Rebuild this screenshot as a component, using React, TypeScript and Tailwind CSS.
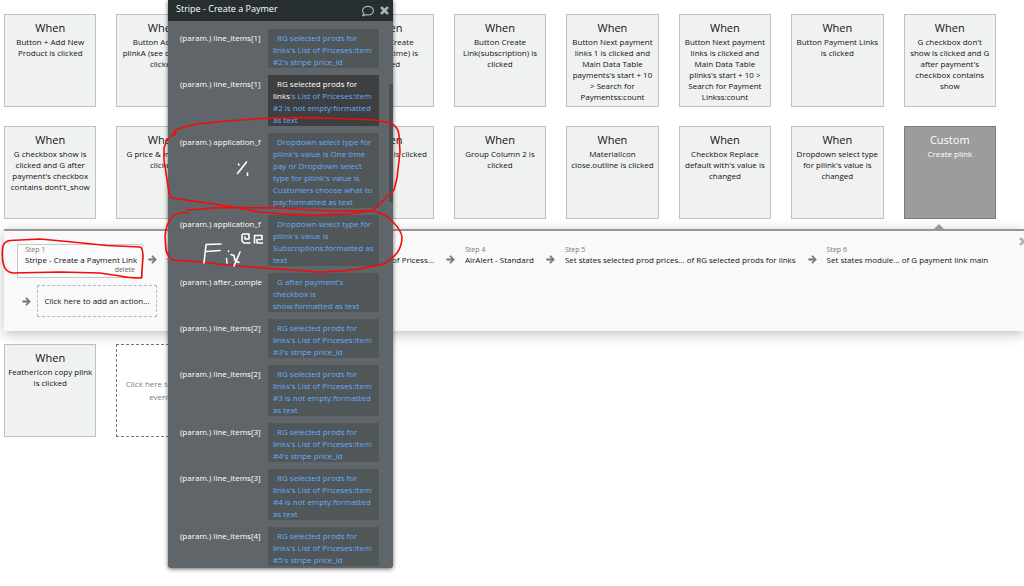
import { FaArrowRight, FaRegComment, FaTimes } from "react-icons/fa";

type EventCard = { kind?: "when" | "custom"; title: string; text: string };

const events: EventCard[] = [
  { title: "When", text: "Button + Add New Product is clicked" },
  { title: "When", text: "Button Add Link plinkA (see descrip) is clicked" },
  { title: "When", text: "Button is clicked" },
  { title: "When", text: "Button Create Link(one time) is clicked" },
  { title: "When", text: "Button Create Link(subscription) is clicked" },
  {
    title: "When",
    text: "Button Next payment links 1 is clicked and Main Data Table payments's start + 10 > Search for Paymentss:count",
  },
  {
    title: "When",
    text: "Button Next payment links is clicked and Main Data Table plinks's start + 10 > Search for Payment Linkss:count",
  },
  { title: "When", text: "Button Payment Links is clicked" },
  { title: "When", text: "G checkbox don't show is clicked and G after payment's checkbox contains show" },
  { title: "When", text: "G checkbox show is clicked and G after payment's checkbox contains dont't_show" },
  { title: "When", text: "G price & interval is clicked" },
  { title: "When", text: "Group is clicked" },
  { title: "When", text: "Group Tabs is clicked" },
  { title: "When", text: "Group Column 2 is clicked" },
  { title: "When", text: "MaterialIcon close.outline is clicked" },
  { title: "When", text: "Checkbox Replace default with's value is changed" },
  { title: "When", text: "Dropdown select type for pliink's value is changed" },
  { kind: "custom", title: "Custom", text: "Create plink" },
];

const params = [
  { label: "(param.) line_items[1]", text: "RG selected prods for links's List of Priceses:item #2's stripe price_id" },
  {
    label: "(param.) line_items[1]",
    lead: "RG selected prods for links",
    text: "'s List of Priceses:item #2 is not empty:formatted as text",
  },
  {
    label: "(param.) application_f",
    text: "Dropdown select type for pliink's value is One time pay or Dropdown select type for pliink's value is Customers choose what to pay:formatted as text",
  },
  { label: "(param.) application_f", text: "Dropdown select type for pliink's value is Subscriptions:formatted as text" },
  { label: "(param.) after_comple", text: "G after payment's checkbox is show:formatted as text" },
  { label: "(param.) line_items[2]", text: "RG selected prods for links's List of Priceses:item #3's stripe price_id" },
  { label: "(param.) line_items[2]", text: "RG selected prods for links's List of Priceses:item #3 is not empty:formatted as text" },
  { label: "(param.) line_items[3]", text: "RG selected prods for links's List of Priceses:item #4's stripe price_id" },
  { label: "(param.) line_items[3]", text: "RG selected prods for links's List of Priceses:item #4 is not empty:formatted as text" },
  { label: "(param.) line_items[4]", text: "RG selected prods for links's List of Priceses:item #5's stripe price_id" },
];

const cardBase = "flex min-h-[93px] w-full flex-col items-center border px-[3px] pt-[7px] text-center";

function Card({ kind = "when", title, text }: EventCard) {
  const custom = kind === "custom";
  return (
    <button
      type="button"
      className={
        custom
          ? `${cardBase} border-[#7d7d7d] bg-[#9c9c9c] text-white`
          : `${cardBase} border-[#b9c2c6] bg-[#f0f2f1] text-[#111]`
      }
    >
      <span className="text-[11px] leading-[11px]">{title}</span>
      <span className="mt-[3px] text-[8px] leading-[11px]">{text}</span>
    </button>
  );
}

function Arrow() {
  return (
    <div className="flex h-7 shrink-0 items-center pr-[3px] pl-[5px]">
      <FaArrowRight className="size-[9px] text-[#777d7f]" stroke="currentColor" strokeWidth={36} />
    </div>
  );
}

function Cross() {
  return <FaTimes className="h-[11px] w-[9px]" stroke="currentColor" strokeWidth={40} />;
}

function Step({ n, text }: { n: number; text: string }) {
  return (
    <div className="shrink-0 px-[7px]">
      <div className="text-[7px] leading-[10px] text-[#777]">Step {n}</div>
      <div className="text-[8px] leading-[10px] whitespace-nowrap text-[#111]">{text}</div>
    </div>
  );
}

function Workflow() {
  return (
    <section className="relative ml-1 h-[102px] border-t-2 border-[#969696] bg-[#f9f9f9] pt-[13px] pl-[13px] shadow-[0_3px_12px_rgba(0,0,0,0.25)]">
      <svg className="absolute -top-[7px] right-[79px] h-[6px] w-3" viewBox="0 0 12 6">
        <path d="M0 6 6 0l6 6z" fill="#969696" />
      </svg>
      <button type="button" aria-label="Close workflow" className="absolute top-[5px] -right-1 text-[#a9b4b8]">
        <Cross />
      </button>
      <div className="flex items-start overflow-hidden">
        <div className="w-[126px] shrink-0 border border-[#c3cacd] bg-[#fbfbfb] pb-[2px]">
          <Step n={1} text="Stripe - Create a Payment Link" />
          <div className="px-[7px] text-right text-[7px] leading-[10px] text-[#666]">
            <button type="button" className="block w-full text-right">delete</button>
          </div>
        </div>
        <div className="flex items-start pt-px">
          <Arrow />
          <div className="w-[100px]"><Step n={2} text="Stripe" /></div>
          <Arrow />
          <div className="flex w-[164px] justify-end"><Step n={3} text="Set states of Pricess..." /></div>
          <Arrow />
          <Step n={4} text="AirAlert - Standard" />
          <Arrow />
          <Step n={5} text="Set states selected prod prices... of RG selected prods for links" />
          <Arrow />
          <Step n={6} text="Set states module... of G payment link main" />
        </div>
      </div>
      <div className="mt-[7px] flex items-center">
        <Arrow />
        <button
          type="button"
          className="ml-[3px] h-8 w-[120px] border border-dashed border-[#aebbc1] text-[8px] text-[#111]"
        >
          Click here to add an action...
        </button>
      </div>
    </section>
  );
}

function PropertyEditor() {
  return (
    <aside className="absolute top-0 left-[168px] flex h-[568px] w-[225px] flex-col overflow-hidden rounded-b-[3px] bg-[#5f6568] shadow-[0_1px_4px_rgba(0,0,0,0.6)]">
      <header className="flex h-[21px] shrink-0 items-center bg-[#272e30] pr-1 pb-1 pl-2 text-white">
        <h2 className="flex-1 text-[9px] leading-3 font-medium">Stripe - Create a Paymer</h2>
        <button type="button" aria-label="Comment" className="mt-1 mr-[6px] text-[#aeb3b5]">
          <FaRegComment className="size-3" />
        </button>
        <button type="button" aria-label="Close" className="mt-1 text-[#b5babc]">
          <Cross />
        </button>
      </header>
      <div className="flex flex-col gap-[7px] pt-2 pr-[14px] pl-3">
        {params.map((p, i) => (
          <div key={i} className="flex items-stretch">
            <div className="w-[88px] shrink-0 overflow-hidden pt-[3px] text-[8px] leading-3 whitespace-nowrap text-white">
              {p.label}
            </div>
            <div
              className={
                p.lead
                  ? "min-w-0 flex-1 bg-[#3e3f40] pt-[3px] pr-1 pl-[5px] indent-1 text-[8px] leading-3 text-[#62aefb]"
                  : "min-w-0 flex-1 bg-[#515658] pt-[3px] pr-1 pl-[5px] indent-1 text-[8px] leading-3 text-[#62aefb]"
              }
            >
              {p.lead && <span className="text-white">{p.lead}</span>}
              {p.text}
            </div>
          </div>
        ))}
      </div>
      <div className="absolute top-[84px] right-0 h-[118px] w-1 bg-[#4b5052]" />
    </aside>
  );
}

function Markup() {
  return (
    <svg
      className="pointer-events-none absolute top-0 left-0 h-[586px] w-[1024px]"
      viewBox="0 0 1024 586"
      fill="none"
      strokeLinecap="round"
      strokeLinejoin="round"
    >
      <g stroke="#f40b0b" strokeWidth="1.6">
        <path d="M175 135 174 132 177 129Q184 127 197 124L227 121 263 118.500Q300 117 327 118L375 120 390 123Q398 126 399 135L400 152 397 178 394 190Q385 199 373 210Q360 213 347 214L310 215Q285 215 260 212L227 206 200 202 172 198Q169 196 168 186L164 160 164 148 167 140 176 132" />
        <path d="M187 210 220 207.500 277 208 330 211 373 211Q386 214 393 222Q401 230 402 237Q402 246 397 253Q390 261 383 264L360 269Q340 272 320 272L277 269 227 265 200 262 173 260Q167 256 166 250L165 236Q166 224 172 217Q176 213 181 213L188 212.500" />
        <path d="M3 246Q5 241 10 240.500L40 239 67 241.500 107 245.500 140 247Q143 248 143 257L142 270 141.500 278Q128 278 120 276L100 273 60 272 13 273Q6 272 4 266Q1 257 3 246" />
      </g>
      <g stroke="#fff" strokeWidth="1.6">
        <path d="M246.500 162 237.500 173.500M238.500 164l.5 1M247.500 173v2.500" />
        <path d="M206 245 204 263M206 244.500 221 244M206 251.500 220 250.500M226.500 258.500l.5 4.500M228.500 251v.5M231 254.500l3 1 1 5 4 2M240 252l-6 14" />
        <path d="M250 243h-6l-2-2v-6l1-1h6v5h-4v-2M254.500 243v-7.500h7.500v4h-5v3.500h5.500" />
      </g>
    </svg>
  );
}

export default function App() {
  return (
    <main
      className="relative min-h-screen overflow-hidden bg-white"
      style={{ fontFamily: '"Open Sans", "Noto Sans", sans-serif' }}
    >
      <div className="grid grid-cols-9 gap-x-5 gap-y-[19px] pt-[14px] pr-7 pl-1">
        {events.map((e, i) => (
          <Card key={i} {...e} />
        ))}
      </div>
      <div className="mt-[10px]">
        <Workflow />
      </div>
      <div className="mt-[13px] grid grid-cols-9 gap-x-5 pr-7 pl-1">
        <Card title="When" text="FeatherIcon copy plink is clicked" />
        <button
          type="button"
          className="min-h-[93px] border border-dashed border-[#777] px-2 pb-[2px] text-center text-[8px] leading-[13px] text-[#7b8082]"
        >
          Click here to add an event...
        </button>
      </div>
      <PropertyEditor />
      <Markup />
    </main>
  );
}
